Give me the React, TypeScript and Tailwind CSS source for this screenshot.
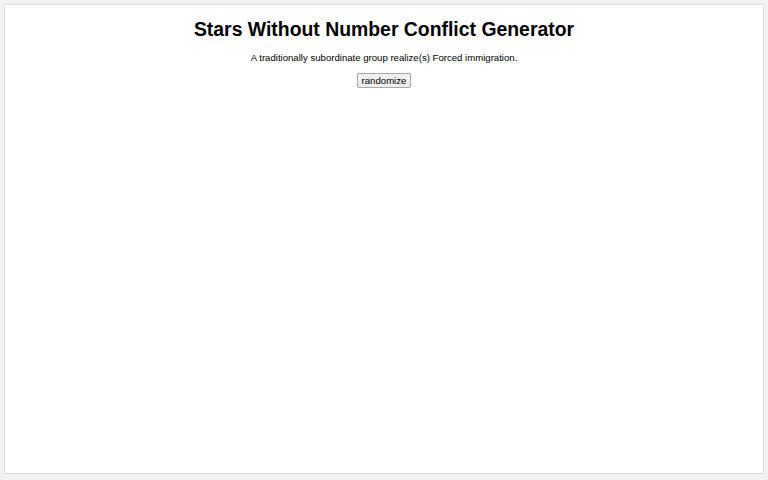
export default function App() {
  return (
    <div className="min-h-screen bg-[#f2f2f2] p-[4px] font-['Liberation_Sans',Arial,sans-serif] text-black">
      <div className="h-[470px] border border-[#dcdcdc] bg-white pt-[12px] text-center">
        <h1 className="text-[19.4px] font-bold leading-[24px]">Stars Without Number Conflict Generator</h1>
        <p className="mt-[11px] text-[9.6px] leading-[12px]">
          A traditionally subordinate group realize(s) Forced immigration.
        </p>
        <button className="mt-[9px] rounded-[2px] border border-[#a8a8a8] bg-[#efefef] px-[4px] text-[9.6px] leading-[13px]">
          randomize
        </button>
      </div>
    </div>
  );
}
